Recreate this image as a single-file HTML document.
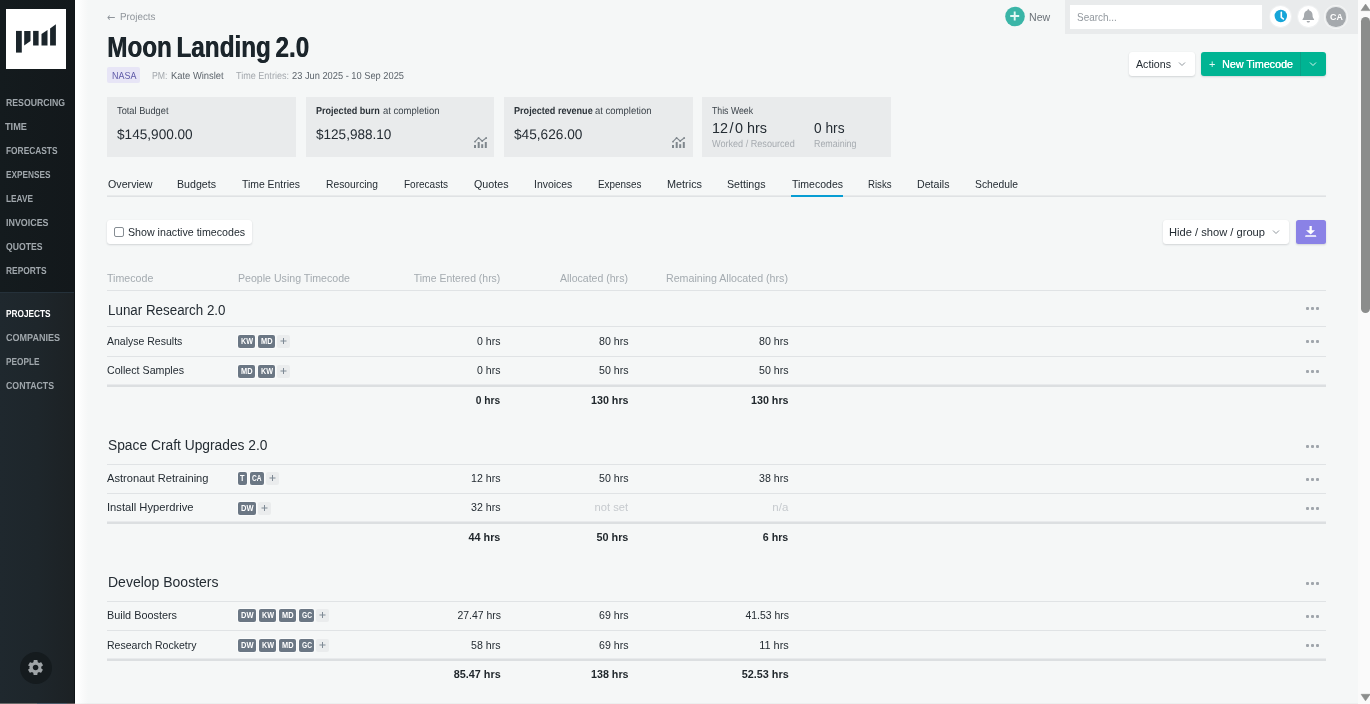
<!DOCTYPE html>
<html lang="en">
<head>
<meta charset="utf-8">
<title>Moon Landing 2.0 - Timecodes</title>
<style>
*{box-sizing:border-box;margin:0;padding:0}
html,body{width:1370px;height:704px;overflow:hidden;background:#f5f7f7;font-family:"Liberation Sans",sans-serif;color:#2b3238;font-size:12px}
body{position:relative}
.t{position:absolute;white-space:nowrap}
.s{position:absolute}
#txt{position:absolute;left:0;top:0;width:1370px;height:704px;will-change:transform}
#side{left:0;top:0;width:75px;height:704px;background:linear-gradient(90deg,#141b1e 0,#13181b 100%)}
#side2{left:0;top:292px;width:75px;height:412px;background:linear-gradient(90deg,#1f282e 0,#1e262b 50%,#1c2124 100%);border-top:1px solid #25313a}
#edge{left:75px;top:0;width:13px;height:704px;background:linear-gradient(90deg,#ffffff 0,#ffffff 22%,#fbfcfc 45%,#f8f9f9 75%,#f5f7f7 100%)}
#logo{left:6px;top:9px;width:60px;height:60px;background:#fff}
#gear{left:20px;top:652px;width:32px;height:32px;border-radius:50%;background:#151b1e}
#topbar{left:1065px;top:0;width:293px;height:34px;background:#e9ebec}
#search{left:1070px;top:5px;width:192px;height:24px;background:#fff}
.circ{position:absolute;width:21px;height:21px;border-radius:50%;background:#fff;top:6px;box-shadow:0 0 0 1px rgba(255,255,255,.3)}
.card{position:absolute;top:97px;height:60px;background:#e9ebec}
#tabline{left:107px;top:195px;width:1219px;height:2px;background:linear-gradient(#e8eaeb 0,#e8eaeb 50%,#dfe2e4 50%,#dfe2e4 100%)}
#tabon{left:791px;top:195px;width:52px;height:2px;background:#079dd3}
.btn{position:absolute;background:#fff;border-radius:3px;box-shadow:0 1px 2px rgba(30,40,50,.16),0 0 1px rgba(30,40,50,.06)}
.hl{position:absolute;left:107px;width:1219px;height:1px;background:#e0e3e5}
.hl.thick{height:3px;background:linear-gradient(#e8eaec 0,#e8eaec 33%,#dcdfe1 33%,#dcdfe1 100%)}
.chip{position:absolute;height:13px;background:#6b7784;border-radius:2px;box-shadow:0 0 0 1px rgba(255,255,255,.6)}
.plus{position:absolute;width:13px;height:13px;background:#eaeced;border-radius:2px}
.plus svg{display:block}
.dots{position:absolute;left:1306px;width:13px;height:3px}
.dots i{position:absolute;top:0;width:3px;height:3px;border-radius:1px;background:#a0a6ac}
#sbtrack{left:1358px;top:0;width:12px;height:704px;background:#fafafa}
#sbthumb{left:1361px;top:16.500px;width:9.200px;height:296.500px;border-radius:4.600px;background:#8b8d8c}
</style>
</head>
<body>
<div class="s" id="side"></div>
<div class="s" id="side2"></div>
<div class="s" id="edge"></div>
<div class="s" style="left:74px;top:0;width:1px;height:704px;background:#101518"></div>
<div class="s" style="left:0;top:703px;width:37px;height:1px;background:#696a6a"></div>
<div class="s" style="left:37px;top:703px;width:30px;height:1px;background:#4d5c6a"></div>
<div class="s" style="left:67px;top:703px;width:8px;height:1px;background:#5e5557"></div>
<div class="s" style="left:75px;top:703px;width:1283px;height:1px;background:rgba(0,0,0,.03)"></div>
<div class="s" id="logo">
<svg width="60" height="60" viewBox="0 0 60 60"><g fill="#1b252b"><path d="M10 21.900h5.800v21.700H10z"/><path d="M18.200 21.900h6.300v10.200l-6.300 4.400z"/><path d="M27.100 21.900h5.500v14.600h-5.500z"/><path d="M35.500 24.900l6-3.800v15.400h-6z"/><path d="M44.100 19.400l5.800-4.200v21.300h-5.800z"/></g></svg>
</div>
<div class="s" id="gear"><svg width="32" height="32" viewBox="0 0 24 24"><path fill="#9fa4a7" transform="translate(11.700 11.650) scale(.59) translate(-12 -12)" d="M19.140 12.940c.04-.3.060-.61.060-.94 0-.32-.02-.64-.07-.94l2.030-1.580a.49.49 0 0 0 .12-.61l-1.920-3.320a.488.488 0 0 0-.59-.22l-2.390.96c-.5-.38-1.030-.7-1.620-.94l-.36-2.540a.484.484 0 0 0-.48-.41h-3.840c-.24 0-.43.170-.47.410l-.36 2.540c-.59.240-1.130.57-1.620.94l-2.390-.96c-.22-.08-.47 0-.59.220L2.740 8.870c-.12.210-.8.470.12.610l2.030 1.580c-.5.300-.9.630-.9.940s.2.640.7.940l-2.030 1.580a.49.49 0 0 0-.12.610l1.920 3.320c.12.220.37.290.59.220l2.390-.96c.5.380 1.030.7 1.620.94l.36 2.540c.5.240.24.410.48.410h3.840c.24 0 .44-.17.470-.41l.36-2.540c.59-.24 1.130-.56 1.620-.94l2.390.96c.22.080.47 0 .59-.22l1.920-3.320c.12-.22.070-.47-.12-.61l-2.010-1.580zM12 15.600c-1.980 0-3.600-1.620-3.600-3.600s1.620-3.600 3.600-3.600 3.600 1.620 3.600 3.600-1.620 3.600-3.600 3.600z"/></svg></div>

<div class="s" style="left:107px;top:67px;width:33px;height:16px;background:#e7e5f6;border-radius:2px"></div>
<div class="s" id="topbar"></div>
<div class="s" id="search"></div>
<svg class="s" style="left:1004px;top:6px" width="22" height="22" viewBox="0 0 22 22"><circle cx="11" cy="10.450" r="9.800" fill="#3ab5a7"/><path d="M10.700 5.500v9M6.200 10h9" stroke="#e4f8f5" stroke-width="1.900" fill="none"/></svg>
<div class="circ" style="left:1270px"></div>
<svg class="s" style="left:1270px;top:6px" width="21" height="21" viewBox="0 0 21 21"><circle cx="10.800" cy="10" r="6.200" fill="#16a5d8"/><path d="M11.300 6.200v5.200l2 1.500" stroke="#fff" stroke-width="1.600" fill="none" stroke-linecap="round" stroke-linejoin="round"/></svg>
<div class="circ" style="left:1298px"></div>
<svg class="s" style="left:1297.500px;top:6px" width="21" height="21" viewBox="0 0 21 21"><path fill="#a5a9ad" d="M10.300 3.200c.5 0 .9.400.9.900v.3c2 .4 3.300 2.100 3.300 4.200 0 2.500.6 3.700 1.500 4.600.3.300.1.900-.4.900H5c-.5 0-.7-.6-.4-.9.900-.9 1.500-2.100 1.500-4.600 0-2.100 1.300-3.800 3.300-4.200v-.3c0-.5.400-.9.900-.9zM8.700 15h3.200c0 .9-.7 1.600-1.600 1.600S8.700 15.900 8.700 15z"/></svg>
<div class="circ" style="left:1326.400px;top:7.300px;width:19.400px;height:19.400px;background:#a5a9ad;box-shadow:0 0 0 1.200px #e9ebec,0 0 0 2px rgba(255,255,255,.6)"></div>

<div class="btn" style="left:1129px;top:52px;width:66px;height:24px"></div>
<svg class="s" style="left:1178px;top:60.600px" width="8" height="6" viewBox="0 0 8 6"><path d="M1 1.500l3 3 3-3" stroke="#90979d" fill="none"/></svg>
<div class="s" style="left:1201px;top:52px;width:125px;height:24px;background:#00b493;border-radius:3px;box-shadow:0 1px 2px rgba(30,40,50,.16)"></div>
<div class="s" style="left:1300px;top:52px;width:1px;height:24px;background:#08a186"></div>
<svg class="s" style="left:1309px;top:60.600px" width="8" height="6" viewBox="0 0 8 6"><path d="M1 1.500l3 3 3-3" stroke="#d8f6ef" fill="none"/></svg>

<div class="card" style="left:107px;width:189px"></div>
<div class="card" style="left:306px;width:188px"></div>
<div class="card" style="left:504px;width:189px"></div>
<div class="card" style="left:702px;width:189px"></div>
<svg class="s" style="left:473px;top:136px" width="15" height="13" viewBox="0 0 15 13"><g fill="#7f878d"><rect x="1" y="9" width="2" height="3"/><rect x="4.700" y="6" width="2" height="6"/><rect x="8.200" y="8.200" width="2" height="3.800"/><rect x="11.800" y="6" width="2" height="6"/></g><path d="M2 5.700L5.600 1.900 9.200 5 13.200 2" stroke="#7f878d" stroke-width="1.100" fill="none" stroke-linejoin="round"/><g fill="#7f878d"><circle cx="2" cy="5.700" r=".9"/><circle cx="5.600" cy="1.900" r=".9"/><circle cx="9.200" cy="5" r=".9"/><circle cx="13.200" cy="2" r=".9"/></g></svg>
<svg class="s" style="left:671px;top:136px" width="15" height="13" viewBox="0 0 15 13"><g fill="#7f878d"><rect x="1" y="9" width="2" height="3"/><rect x="4.700" y="6" width="2" height="6"/><rect x="8.200" y="8.200" width="2" height="3.800"/><rect x="11.800" y="6" width="2" height="6"/></g><path d="M2 5.700L5.600 1.900 9.200 5 13.200 2" stroke="#7f878d" stroke-width="1.100" fill="none" stroke-linejoin="round"/><g fill="#7f878d"><circle cx="2" cy="5.700" r=".9"/><circle cx="5.600" cy="1.900" r=".9"/><circle cx="9.200" cy="5" r=".9"/><circle cx="13.200" cy="2" r=".9"/></g></svg>

<div class="s" id="tabline"></div>
<div class="s" id="tabon"></div>

<div class="btn" style="left:107px;top:220px;width:145px;height:24px"></div>
<div class="s" style="left:114px;top:227px;width:10px;height:10px;border:1px solid #868d93;border-radius:2px;background:#fff"></div>
<div class="btn" style="left:1163px;top:220px;width:126px;height:24px"></div>
<svg class="s" style="left:1272px;top:228.600px" width="8" height="6" viewBox="0 0 8 6"><path d="M1 1.500l3 3 3-3" stroke="#90979d" fill="none"/></svg>
<div class="s" style="left:1296px;top:220px;width:30px;height:24px;background:#8a82e6;border-radius:2.500px;box-shadow:0 1px 2px rgba(30,40,50,.16)"></div>
<svg class="s" style="left:1304px;top:225px" width="14" height="13" viewBox="0 0 14 13"><path fill="#fff" d="M5.500 1h2.300v4.200h3.200L6.700 9.600 2 5.200h3.500zM1.600 10.300h10.200l.6 1.400H1z"/></svg>

<div class="hl" style="top:290px"></div>
<div class="dots" style="top:307px"><i style="left:0"></i><i style="left:5px"></i><i style="left:10px"></i></div>
<div class="hl" style="top:326px"></div>
<div class="hl" style="top:356px"></div>
<div class="hl thick" style="top:384px"></div>
<div class="chip" style="left:238px;top:335px;width:17px"></div>
<div class="chip" style="left:258px;top:335px;width:17px"></div>
<div class="plus" style="left:277px;top:335px"><svg width="13" height="13" viewBox="0 0 13 13"><path d="M6.500 3v6M3.500 6h6" stroke="#7f8a95" stroke-width="1" fill="none"/></svg></div>
<div class="dots" style="top:340px"><i style="left:0"></i><i style="left:5px"></i><i style="left:10px"></i></div>
<div class="chip" style="left:238px;top:365px;width:17px"></div>
<div class="chip" style="left:258px;top:365px;width:17px"></div>
<div class="plus" style="left:277px;top:365px"><svg width="13" height="13" viewBox="0 0 13 13"><path d="M6.500 3v6M3.500 6h6" stroke="#7f8a95" stroke-width="1" fill="none"/></svg></div>
<div class="dots" style="top:370px"><i style="left:0"></i><i style="left:5px"></i><i style="left:10px"></i></div>
<div class="dots" style="top:445px"><i style="left:0"></i><i style="left:5px"></i><i style="left:10px"></i></div>
<div class="hl" style="top:464px"></div>
<div class="hl" style="top:493px"></div>
<div class="hl thick" style="top:521px"></div>
<div class="chip" style="left:238px;top:472px;width:9px"></div>
<div class="chip" style="left:250px;top:472px;width:14px"></div>
<div class="plus" style="left:266px;top:472px"><svg width="13" height="13" viewBox="0 0 13 13"><path d="M6.500 3v6M3.500 6h6" stroke="#7f8a95" stroke-width="1" fill="none"/></svg></div>
<div class="dots" style="top:478px"><i style="left:0"></i><i style="left:5px"></i><i style="left:10px"></i></div>
<div class="chip" style="left:238px;top:502px;width:18px"></div>
<div class="plus" style="left:258px;top:502px"><svg width="13" height="13" viewBox="0 0 13 13"><path d="M6.500 3v6M3.500 6h6" stroke="#7f8a95" stroke-width="1" fill="none"/></svg></div>
<div class="dots" style="top:507px"><i style="left:0"></i><i style="left:5px"></i><i style="left:10px"></i></div>
<div class="dots" style="top:582px"><i style="left:0"></i><i style="left:5px"></i><i style="left:10px"></i></div>
<div class="hl" style="top:601px"></div>
<div class="hl" style="top:630px"></div>
<div class="hl thick" style="top:658px"></div>
<div class="chip" style="left:238px;top:609px;width:18px"></div>
<div class="chip" style="left:259px;top:609px;width:17px"></div>
<div class="chip" style="left:279px;top:609px;width:17px"></div>
<div class="chip" style="left:299px;top:609px;width:15px"></div>
<div class="plus" style="left:316px;top:609px"><svg width="13" height="13" viewBox="0 0 13 13"><path d="M6.500 3v6M3.500 6h6" stroke="#7f8a95" stroke-width="1" fill="none"/></svg></div>
<div class="dots" style="top:615px"><i style="left:0"></i><i style="left:5px"></i><i style="left:10px"></i></div>
<div class="chip" style="left:238px;top:639px;width:18px"></div>
<div class="chip" style="left:259px;top:639px;width:17px"></div>
<div class="chip" style="left:279px;top:639px;width:17px"></div>
<div class="chip" style="left:299px;top:639px;width:15px"></div>
<div class="plus" style="left:316px;top:639px"><svg width="13" height="13" viewBox="0 0 13 13"><path d="M6.500 3v6M3.500 6h6" stroke="#7f8a95" stroke-width="1" fill="none"/></svg></div>
<div class="dots" style="top:644px"><i style="left:0"></i><i style="left:5px"></i><i style="left:10px"></i></div>
<div id="txt">
<div class="t" style="top:97px;font-size:10.2px;line-height:14px;height:14px;color:#a0a7ac;font-weight:bold;text-rendering:geometricPrecision;left:5.70px;transform:scaleX(0.8543);transform-origin:0 50%;">RESOURCING</div>
<div class="t" style="top:121px;font-size:10.2px;line-height:14px;height:14px;color:#a0a7ac;font-weight:bold;text-rendering:geometricPrecision;left:4.80px;transform:scaleX(0.9037);transform-origin:0 50%;">TIME</div>
<div class="t" style="top:145px;font-size:10.2px;line-height:14px;height:14px;color:#a0a7ac;font-weight:bold;text-rendering:geometricPrecision;left:5.70px;transform:scaleX(0.8197);transform-origin:0 50%;">FORECASTS</div>
<div class="t" style="top:169px;font-size:10.2px;line-height:14px;height:14px;color:#a0a7ac;font-weight:bold;text-rendering:geometricPrecision;left:5.70px;transform:scaleX(0.8100);transform-origin:0 50%;">EXPENSES</div>
<div class="t" style="top:193px;font-size:10.2px;line-height:14px;height:14px;color:#a0a7ac;font-weight:bold;text-rendering:geometricPrecision;left:5.70px;transform:scaleX(0.8128);transform-origin:0 50%;">LEAVE</div>
<div class="t" style="top:217px;font-size:10.2px;line-height:14px;height:14px;color:#a0a7ac;font-weight:bold;text-rendering:geometricPrecision;left:5.70px;transform:scaleX(0.8729);transform-origin:0 50%;">INVOICES</div>
<div class="t" style="top:241px;font-size:10.2px;line-height:14px;height:14px;color:#a0a7ac;font-weight:bold;text-rendering:geometricPrecision;left:5.70px;transform:scaleX(0.8482);transform-origin:0 50%;">QUOTES</div>
<div class="t" style="top:265px;font-size:10.2px;line-height:14px;height:14px;color:#a0a7ac;font-weight:bold;text-rendering:geometricPrecision;left:5.70px;transform:scaleX(0.8223);transform-origin:0 50%;">REPORTS</div>
<div class="t" style="top:308px;font-size:10.2px;line-height:14px;height:14px;color:#ffffff;font-weight:bold;text-rendering:geometricPrecision;left:5.70px;transform:scaleX(0.8102);transform-origin:0 50%;">PROJECTS</div>
<div class="t" style="top:332px;font-size:10.2px;line-height:14px;height:14px;color:#a0a7ac;font-weight:bold;text-rendering:geometricPrecision;left:5.70px;transform:scaleX(0.8859);transform-origin:0 50%;">COMPANIES</div>
<div class="t" style="top:356px;font-size:10.2px;line-height:14px;height:14px;color:#a0a7ac;font-weight:bold;text-rendering:geometricPrecision;left:5.70px;transform:scaleX(0.8106);transform-origin:0 50%;">PEOPLE</div>
<div class="t" style="top:380px;font-size:10.2px;line-height:14px;height:14px;color:#a0a7ac;font-weight:bold;text-rendering:geometricPrecision;left:5.70px;transform:scaleX(0.8595);transform-origin:0 50%;">CONTACTS</div>
<div class="t" style="top:10px;font-size:11px;line-height:15px;height:15px;color:#8f959b;text-rendering:geometricPrecision;font-family:'DejaVu Sans','Liberation Sans',sans-serif;left:107.20px;transform:scaleX(0.9112);transform-origin:0 50%;">←</div>
<div class="t" style="top:11px;font-size:10.2px;line-height:14px;height:14px;color:#8f959b;text-rendering:geometricPrecision;left:119.90px;transform:scaleX(0.9643);transform-origin:0 50%;">Projects</div>
<div class="t" style="top:27px;font-size:29px;line-height:41px;height:41px;color:#1b252b;font-weight:bold;text-shadow:0.55px 0 0 #1b252b;word-spacing:-2.5px;left:107.40px;transform:scaleX(0.8364);transform-origin:0 50%;">Moon Landing 2.0</div>
<div class="t" style="top:70px;font-size:10.2px;line-height:14px;height:14px;color:#5f5aa8;text-rendering:geometricPrecision;left:111.70px;transform:scaleX(0.8793);transform-origin:0 50%;">NASA</div>
<div class="t" style="top:70px;font-size:10.2px;line-height:14px;height:14px;color:#a3a8ad;text-rendering:geometricPrecision;left:152.40px;transform:scaleX(0.8552);transform-origin:0 50%;">PM:</div>
<div class="t" style="top:70px;font-size:10.2px;line-height:14px;height:14px;color:#5d656c;text-rendering:geometricPrecision;left:170.90px;transform:scaleX(0.9215);transform-origin:0 50%;">Kate Winslet</div>
<div class="t" style="top:70px;font-size:10.2px;line-height:14px;height:14px;color:#a3a8ad;text-rendering:geometricPrecision;left:236.30px;transform:scaleX(0.8887);transform-origin:0 50%;">Time Entries:</div>
<div class="t" style="top:70px;font-size:10.2px;line-height:14px;height:14px;color:#5d656c;text-rendering:geometricPrecision;left:292.00px;transform:scaleX(0.9111);transform-origin:0 50%;">23 Jun 2025 - 10 Sep 2025</div>
<div class="t" style="top:10px;font-size:11px;line-height:15px;height:15px;color:#6a7178;left:1029.40px;transform:scaleX(0.9630);transform-origin:0 50%;">New</div>
<div class="t" style="top:10px;font-size:11px;line-height:15px;height:15px;color:#92989e;left:1076.80px;transform:scaleX(0.9039);transform-origin:0 50%;">Search...</div>
<div class="t" style="top:11px;font-size:9px;line-height:13px;height:13px;color:#ffffff;font-weight:bold;left:1330.20px;transform:scaleX(0.9846);transform-origin:0 50%;">CA</div>
<div class="t" style="top:57px;font-size:11px;line-height:15px;height:15px;color:#242c33;left:1136.10px;transform:scaleX(0.9701);transform-origin:0 50%;">Actions</div>
<div class="t" style="top:57px;font-size:11px;line-height:15px;height:15px;color:#ffffff;text-shadow:0.3px 0 0 #fff;left:1221.50px;transform:scaleX(0.9730);transform-origin:0 50%;">New Timecode</div>
<div class="t" style="top:57px;font-size:11px;line-height:15px;height:15px;color:#e6faf6;left:1208.80px;transform:scaleX(0.9942);transform-origin:0 50%;">+</div>
<div class="t" style="top:105px;font-size:10.2px;line-height:14px;height:14px;color:#3a4249;text-rendering:geometricPrecision;left:117.00px;transform:scaleX(0.9092);transform-origin:0 50%;">Total Budget</div>
<div class="t" style="top:125px;font-size:13.8px;line-height:19px;height:19px;color:#242c33;text-rendering:geometricPrecision;left:117.00px;transform:scaleX(0.9865);transform-origin:0 50%;">$145,900.00</div>
<div class="t" style="top:105px;font-size:10.2px;line-height:14px;height:14px;color:#2b3238;font-weight:bold;text-rendering:geometricPrecision;left:315.70px;transform:scaleX(0.8875);transform-origin:0 50%;">Projected burn</div>
<div class="t" style="top:105px;font-size:10.2px;line-height:14px;height:14px;color:#3a4249;text-rendering:geometricPrecision;left:382.50px;transform:scaleX(0.9324);transform-origin:0 50%;">at completion</div>
<div class="t" style="top:125px;font-size:13.8px;line-height:19px;height:19px;color:#242c33;text-rendering:geometricPrecision;left:315.70px;transform:scaleX(0.9826);transform-origin:0 50%;">$125,988.10</div>
<div class="t" style="top:105px;font-size:10.2px;line-height:14px;height:14px;color:#2b3238;font-weight:bold;text-rendering:geometricPrecision;left:513.70px;transform:scaleX(0.8908);transform-origin:0 50%;">Projected revenue</div>
<div class="t" style="top:105px;font-size:10.2px;line-height:14px;height:14px;color:#3a4249;text-rendering:geometricPrecision;left:595.00px;transform:scaleX(0.9324);transform-origin:0 50%;">at completion</div>
<div class="t" style="top:125px;font-size:13.8px;line-height:19px;height:19px;color:#242c33;text-rendering:geometricPrecision;left:513.70px;transform:scaleX(0.9904);transform-origin:0 50%;">$45,626.00</div>
<div class="t" style="top:105px;font-size:10.2px;line-height:14px;height:14px;color:#3a4249;text-rendering:geometricPrecision;left:712.30px;transform:scaleX(0.8553);transform-origin:0 50%;">This Week</div>
<div class="t" style="top:118px;font-size:14px;line-height:20px;height:20px;color:#242c33;left:712.40px;transform:scaleX(1.0262);transform-origin:0 50%;">12<span style="margin:0 1.5px">/</span>0 hrs</div>
<div class="t" style="top:138px;font-size:10.2px;line-height:14px;height:14px;color:#a6abb0;text-rendering:geometricPrecision;left:712.30px;transform:scaleX(0.8922);transform-origin:0 50%;">Worked / Resourced</div>
<div class="t" style="top:118px;font-size:14px;line-height:20px;height:20px;color:#242c33;left:814.00px;transform:scaleX(0.9799);transform-origin:0 50%;">0 hrs</div>
<div class="t" style="top:138px;font-size:10.2px;line-height:14px;height:14px;color:#a6abb0;text-rendering:geometricPrecision;left:814.00px;transform:scaleX(0.8726);transform-origin:0 50%;">Remaining</div>
<div class="t" style="top:177px;font-size:11px;line-height:15px;height:15px;color:#242c33;left:108.00px;transform:scaleX(0.9707);transform-origin:0 50%;">Overview</div>
<div class="t" style="top:177px;font-size:11px;line-height:15px;height:15px;color:#242c33;left:177.40px;transform:scaleX(0.9659);transform-origin:0 50%;">Budgets</div>
<div class="t" style="top:177px;font-size:11px;line-height:15px;height:15px;color:#242c33;left:242.00px;transform:scaleX(0.9457);transform-origin:0 50%;">Time Entries</div>
<div class="t" style="top:177px;font-size:11px;line-height:15px;height:15px;color:#242c33;left:326.20px;transform:scaleX(0.9346);transform-origin:0 50%;">Resourcing</div>
<div class="t" style="top:177px;font-size:11px;line-height:15px;height:15px;color:#242c33;left:404.20px;transform:scaleX(0.9110);transform-origin:0 50%;">Forecasts</div>
<div class="t" style="top:177px;font-size:11px;line-height:15px;height:15px;color:#242c33;left:473.70px;transform:scaleX(0.9727);transform-origin:0 50%;">Quotes</div>
<div class="t" style="top:177px;font-size:11px;line-height:15px;height:15px;color:#242c33;left:534.20px;transform:scaleX(0.9465);transform-origin:0 50%;">Invoices</div>
<div class="t" style="top:177px;font-size:11px;line-height:15px;height:15px;color:#242c33;left:597.80px;transform:scaleX(0.9004);transform-origin:0 50%;">Expenses</div>
<div class="t" style="top:177px;font-size:11px;line-height:15px;height:15px;color:#242c33;left:667.00px;transform:scaleX(0.9872);transform-origin:0 50%;">Metrics</div>
<div class="t" style="top:177px;font-size:11px;line-height:15px;height:15px;color:#242c33;left:727.40px;transform:scaleX(0.9711);transform-origin:0 50%;">Settings</div>
<div class="t" style="top:177px;font-size:11px;line-height:15px;height:15px;color:#242c33;left:791.50px;transform:scaleX(0.9552);transform-origin:0 50%;">Timecodes</div>
<div class="t" style="top:177px;font-size:11px;line-height:15px;height:15px;color:#242c33;left:867.80px;transform:scaleX(0.8776);transform-origin:0 50%;">Risks</div>
<div class="t" style="top:177px;font-size:11px;line-height:15px;height:15px;color:#242c33;left:917.30px;transform:scaleX(0.9665);transform-origin:0 50%;">Details</div>
<div class="t" style="top:177px;font-size:11px;line-height:15px;height:15px;color:#242c33;left:975.30px;transform:scaleX(0.9373);transform-origin:0 50%;">Schedule</div>
<div class="t" style="top:225px;font-size:11px;line-height:15px;height:15px;color:#242c33;left:128.30px;transform:scaleX(0.9681);transform-origin:0 50%;">Show inactive timecodes</div>
<div class="t" style="top:225px;font-size:11px;line-height:15px;height:15px;color:#242c33;left:1169.30px;transform:scaleX(1.0129);transform-origin:0 50%;">Hide / show / group</div>
<div class="t" style="top:271px;font-size:11px;line-height:15px;height:15px;color:#a4abb0;left:107.30px;transform:scaleX(0.9668);transform-origin:0 50%;">Timecode</div>
<div class="t" style="top:271px;font-size:11px;line-height:15px;height:15px;color:#a4abb0;left:238.30px;transform:scaleX(0.9640);transform-origin:0 50%;">People Using Timecode</div>
<div class="t" style="top:271px;font-size:11px;line-height:15px;height:15px;color:#a4abb0;right:870.00px;transform:scaleX(0.9475);transform-origin:100% 50%;">Time Entered (hrs)</div>
<div class="t" style="top:271px;font-size:11px;line-height:15px;height:15px;color:#a4abb0;right:742.00px;transform:scaleX(0.9588);transform-origin:100% 50%;">Allocated (hrs)</div>
<div class="t" style="top:271px;font-size:11px;line-height:15px;height:15px;color:#a4abb0;right:582.00px;transform:scaleX(0.9686);transform-origin:100% 50%;">Remaining Allocated (hrs)</div>
<div class="t" style="top:300px;font-size:14px;line-height:20px;height:20px;color:#242c33;left:108.00px;transform:scaleX(0.9555);transform-origin:0 50%;">Lunar Research 2.0</div>
<div class="t" style="top:334px;font-size:11px;line-height:15px;height:15px;color:#242c33;left:107.30px;transform:scaleX(0.9547);transform-origin:0 50%;">Analyse Results</div>
<div class="t" style="top:335px;font-size:9px;line-height:13px;height:13px;color:#ffffff;font-weight:bold;left:240.50px;transform:scaleX(0.8000);transform-origin:0 50%;">KW</div>
<div class="t" style="top:335px;font-size:9px;line-height:13px;height:13px;color:#ffffff;font-weight:bold;left:260.75px;transform:scaleX(0.8214);transform-origin:0 50%;">MD</div>
<div class="t" style="top:334px;font-size:11px;line-height:15px;height:15px;color:#242c33;right:869.50px;transform:scaleX(0.9563);transform-origin:100% 50%;">0 hrs</div>
<div class="t" style="top:334px;font-size:11px;line-height:15px;height:15px;color:#242c33;right:741.50px;transform:scaleX(0.9647);transform-origin:100% 50%;">80 hrs</div>
<div class="t" style="top:334px;font-size:11px;line-height:15px;height:15px;color:#242c33;right:581.50px;transform:scaleX(0.9647);transform-origin:100% 50%;">80 hrs</div>
<div class="t" style="top:363px;font-size:11px;line-height:15px;height:15px;color:#242c33;left:107.30px;transform:scaleX(0.9687);transform-origin:0 50%;">Collect Samples</div>
<div class="t" style="top:365px;font-size:9px;line-height:13px;height:13px;color:#ffffff;font-weight:bold;left:240.75px;transform:scaleX(0.8214);transform-origin:0 50%;">MD</div>
<div class="t" style="top:365px;font-size:9px;line-height:13px;height:13px;color:#ffffff;font-weight:bold;left:260.50px;transform:scaleX(0.8000);transform-origin:0 50%;">KW</div>
<div class="t" style="top:363px;font-size:11px;line-height:15px;height:15px;color:#242c33;right:869.50px;transform:scaleX(0.9563);transform-origin:100% 50%;">0 hrs</div>
<div class="t" style="top:363px;font-size:11px;line-height:15px;height:15px;color:#242c33;right:741.50px;transform:scaleX(0.9647);transform-origin:100% 50%;">50 hrs</div>
<div class="t" style="top:363px;font-size:11px;line-height:15px;height:15px;color:#242c33;right:581.50px;transform:scaleX(0.9647);transform-origin:100% 50%;">50 hrs</div>
<div class="t" style="top:393px;font-size:11px;line-height:15px;height:15px;color:#1f262b;font-weight:bold;right:869.50px;transform:scaleX(0.9317);transform-origin:100% 50%;">0 hrs</div>
<div class="t" style="top:393px;font-size:11px;line-height:15px;height:15px;color:#1f262b;font-weight:bold;right:741.50px;transform:scaleX(0.9732);transform-origin:100% 50%;">130 hrs</div>
<div class="t" style="top:393px;font-size:11px;line-height:15px;height:15px;color:#1f262b;font-weight:bold;right:581.50px;transform:scaleX(0.9732);transform-origin:100% 50%;">130 hrs</div>
<div class="t" style="top:435px;font-size:14px;line-height:20px;height:20px;color:#242c33;left:108.00px;transform:scaleX(0.9853);transform-origin:0 50%;">Space Craft Upgrades 2.0</div>
<div class="t" style="top:471px;font-size:11px;line-height:15px;height:15px;color:#242c33;left:107.30px;transform:scaleX(1.0122);transform-origin:0 50%;">Astronaut Retraining</div>
<div class="t" style="top:472px;font-size:9px;line-height:13px;height:13px;color:#ffffff;font-weight:bold;left:240.25px;transform:scaleX(0.8182);transform-origin:0 50%;">T</div>
<div class="t" style="top:472px;font-size:9px;line-height:13px;height:13px;color:#ffffff;font-weight:bold;left:252.25px;transform:scaleX(0.7308);transform-origin:0 50%;">CA</div>
<div class="t" style="top:471px;font-size:11px;line-height:15px;height:15px;color:#242c33;right:869.50px;transform:scaleX(0.9647);transform-origin:100% 50%;">12 hrs</div>
<div class="t" style="top:471px;font-size:11px;line-height:15px;height:15px;color:#242c33;right:741.50px;transform:scaleX(0.9647);transform-origin:100% 50%;">50 hrs</div>
<div class="t" style="top:471px;font-size:11px;line-height:15px;height:15px;color:#242c33;right:581.50px;transform:scaleX(0.9647);transform-origin:100% 50%;">38 hrs</div>
<div class="t" style="top:500px;font-size:11px;line-height:15px;height:15px;color:#242c33;left:107.30px;transform:scaleX(1.0178);transform-origin:0 50%;">Install Hyperdrive</div>
<div class="t" style="top:502px;font-size:9px;line-height:13px;height:13px;color:#ffffff;font-weight:bold;left:240.75px;transform:scaleX(0.8333);transform-origin:0 50%;">DW</div>
<div class="t" style="top:500px;font-size:11px;line-height:15px;height:15px;color:#242c33;right:869.50px;transform:scaleX(0.9647);transform-origin:100% 50%;">32 hrs</div>
<div class="t" style="top:500px;font-size:11px;line-height:15px;height:15px;color:#c6cace;right:741.50px;transform:scaleX(1.0142);transform-origin:100% 50%;">not set</div>
<div class="t" style="top:500px;font-size:11px;line-height:15px;height:15px;color:#c6cace;right:581.50px;transform:scaleX(1.0460);transform-origin:100% 50%;">n/a</div>
<div class="t" style="top:530px;font-size:11px;line-height:15px;height:15px;color:#1f262b;font-weight:bold;right:869.50px;transform:scaleX(0.9870);transform-origin:100% 50%;">44 hrs</div>
<div class="t" style="top:530px;font-size:11px;line-height:15px;height:15px;color:#1f262b;font-weight:bold;right:741.50px;transform:scaleX(0.9870);transform-origin:100% 50%;">50 hrs</div>
<div class="t" style="top:530px;font-size:11px;line-height:15px;height:15px;color:#1f262b;font-weight:bold;right:581.50px;transform:scaleX(0.9697);transform-origin:100% 50%;">6 hrs</div>
<div class="t" style="top:572px;font-size:14px;line-height:20px;height:20px;color:#242c33;left:108.00px;transform:scaleX(0.9999);transform-origin:0 50%;">Develop Boosters</div>
<div class="t" style="top:608px;font-size:11px;line-height:15px;height:15px;color:#242c33;left:107.30px;transform:scaleX(0.9868);transform-origin:0 50%;">Build Boosters</div>
<div class="t" style="top:609px;font-size:9px;line-height:13px;height:13px;color:#ffffff;font-weight:bold;left:240.75px;transform:scaleX(0.8333);transform-origin:0 50%;">DW</div>
<div class="t" style="top:609px;font-size:9px;line-height:13px;height:13px;color:#ffffff;font-weight:bold;left:261.50px;transform:scaleX(0.8000);transform-origin:0 50%;">KW</div>
<div class="t" style="top:609px;font-size:9px;line-height:13px;height:13px;color:#ffffff;font-weight:bold;left:281.75px;transform:scaleX(0.8214);transform-origin:0 50%;">MD</div>
<div class="t" style="top:609px;font-size:9px;line-height:13px;height:13px;color:#ffffff;font-weight:bold;left:301.50px;transform:scaleX(0.7407);transform-origin:0 50%;">GC</div>
<div class="t" style="top:608px;font-size:11px;line-height:15px;height:15px;color:#242c33;right:869.50px;transform:scaleX(0.9482);transform-origin:100% 50%;">27.47 hrs</div>
<div class="t" style="top:608px;font-size:11px;line-height:15px;height:15px;color:#242c33;right:741.50px;transform:scaleX(0.9647);transform-origin:100% 50%;">69 hrs</div>
<div class="t" style="top:608px;font-size:11px;line-height:15px;height:15px;color:#242c33;right:581.50px;transform:scaleX(0.9482);transform-origin:100% 50%;">41.53 hrs</div>
<div class="t" style="top:638px;font-size:11px;line-height:15px;height:15px;color:#242c33;left:107.30px;transform:scaleX(0.9567);transform-origin:0 50%;">Research Rocketry</div>
<div class="t" style="top:639px;font-size:9px;line-height:13px;height:13px;color:#ffffff;font-weight:bold;left:240.75px;transform:scaleX(0.8333);transform-origin:0 50%;">DW</div>
<div class="t" style="top:639px;font-size:9px;line-height:13px;height:13px;color:#ffffff;font-weight:bold;left:261.50px;transform:scaleX(0.8000);transform-origin:0 50%;">KW</div>
<div class="t" style="top:639px;font-size:9px;line-height:13px;height:13px;color:#ffffff;font-weight:bold;left:281.75px;transform:scaleX(0.8214);transform-origin:0 50%;">MD</div>
<div class="t" style="top:639px;font-size:9px;line-height:13px;height:13px;color:#ffffff;font-weight:bold;left:301.50px;transform:scaleX(0.7407);transform-origin:0 50%;">GC</div>
<div class="t" style="top:638px;font-size:11px;line-height:15px;height:15px;color:#242c33;right:869.50px;transform:scaleX(0.9647);transform-origin:100% 50%;">58 hrs</div>
<div class="t" style="top:638px;font-size:11px;line-height:15px;height:15px;color:#242c33;right:741.50px;transform:scaleX(0.9647);transform-origin:100% 50%;">69 hrs</div>
<div class="t" style="top:638px;font-size:11px;line-height:15px;height:15px;color:#242c33;right:581.50px;transform:scaleX(0.9911);transform-origin:100% 50%;">11 hrs</div>
<div class="t" style="top:667px;font-size:11px;line-height:15px;height:15px;color:#1f262b;font-weight:bold;right:869.50px;transform:scaleX(0.9853);transform-origin:100% 50%;">85.47 hrs</div>
<div class="t" style="top:667px;font-size:11px;line-height:15px;height:15px;color:#1f262b;font-weight:bold;right:741.50px;transform:scaleX(0.9732);transform-origin:100% 50%;">138 hrs</div>
<div class="t" style="top:667px;font-size:11px;line-height:15px;height:15px;color:#1f262b;font-weight:bold;right:581.50px;transform:scaleX(0.9853);transform-origin:100% 50%;">52.53 hrs</div>
</div>
<div class="s" id="sbtrack"></div>
<div class="s" id="sbthumb"></div>
<svg class="s" style="left:1358px;top:0" width="12" height="16" viewBox="0 0 12 16"><path d="M3.100 10.600l4.500-6.500 4.500 6.500z" fill="#8b8d8c" stroke="#8b8d8c" stroke-width=".6" stroke-linejoin="round"/></svg>
<svg class="s" style="left:1358px;top:688px" width="12" height="16" viewBox="0 0 12 16"><path d="M3.100 6.300l4.400 6.500 4.600-6.500z" fill="#8b8d8c" stroke="#8b8d8c" stroke-width=".6" stroke-linejoin="round"/></svg>
</body>
</html>
